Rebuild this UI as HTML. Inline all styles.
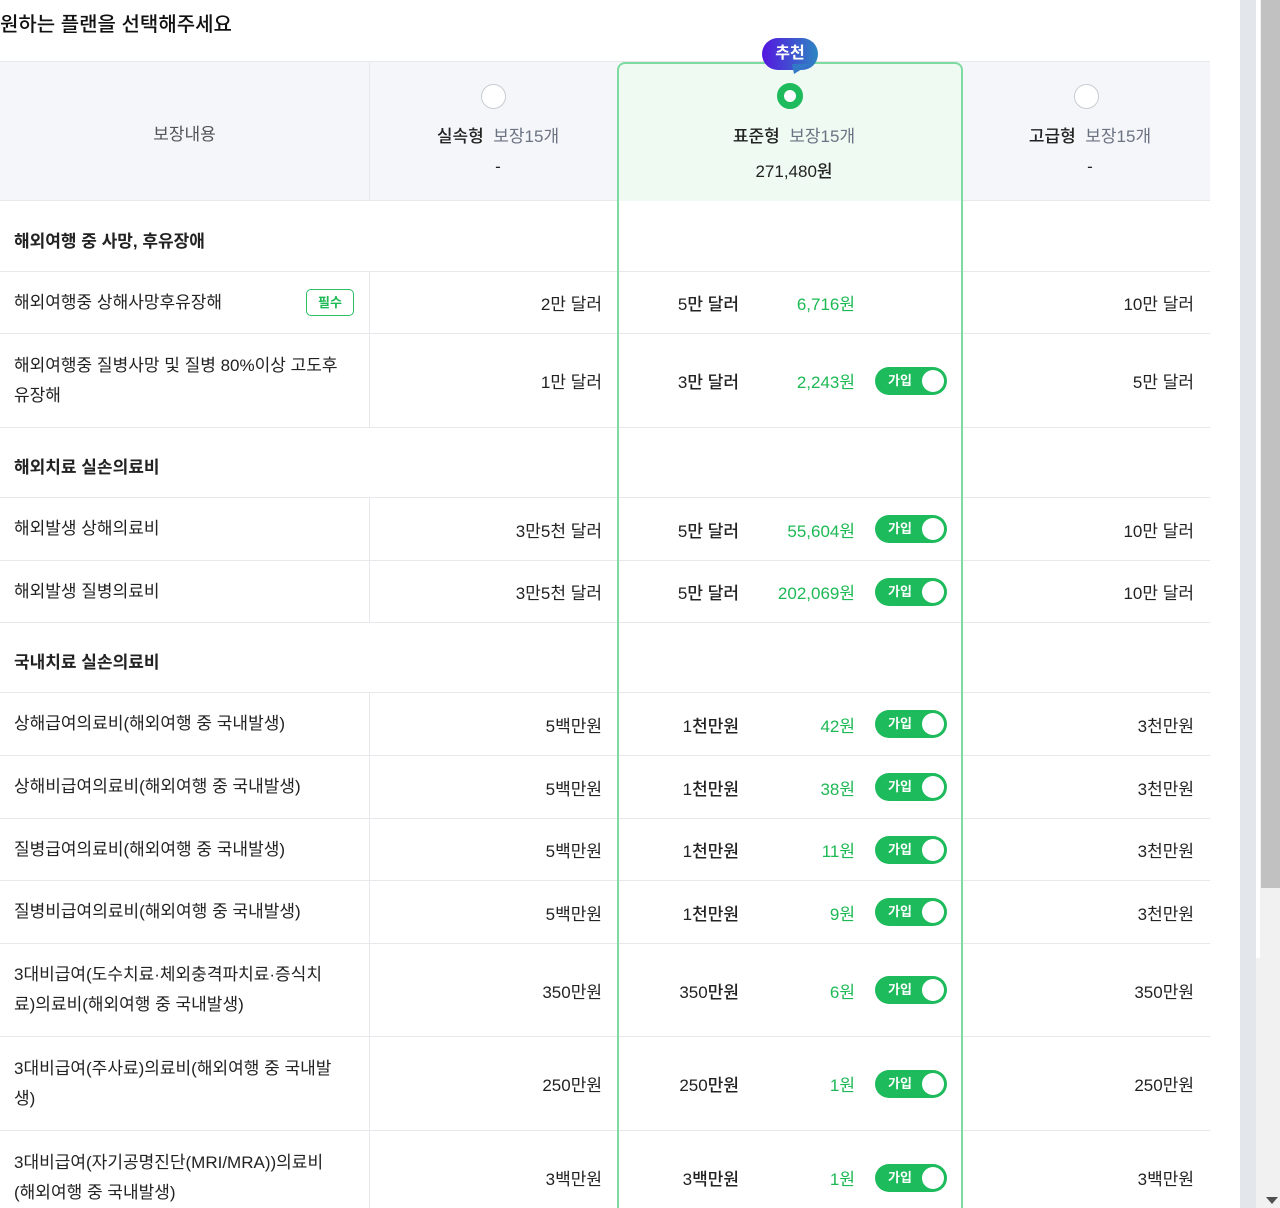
<!DOCTYPE html>
<html style="width:1280px;height:1208px;overflow:hidden"><head><meta charset="utf-8"><style>
*{margin:0;padding:0;box-sizing:border-box}
body{width:1280px;height:1208px;overflow:hidden;background:#fff;font-family:"Liberation Sans","Noto Sans CJK KR",sans-serif;color:#222;position:relative}
.a{position:absolute}
.title{left:0;top:8px;font-size:20px;font-weight:500;color:#111}
.hd{left:0;top:61px;width:1210px;height:140px;background:#f5f6f9;border-top:1px solid #e6e8ec;border-bottom:1px solid #e6e8ec}
.row{position:absolute;left:0;width:1210px;border-bottom:1px solid #e6e8ec;font-size:17px}
.lab{position:absolute;left:0;top:0;bottom:0;width:370px;border-right:1px solid #e6e8ec;padding:0 28px 0 14px;display:flex;align-items:center;line-height:30px}
.c2{position:absolute;right:608px;top:0;bottom:0;display:flex;align-items:center}
.c3{position:absolute;left:618px;width:121px;top:0;bottom:0;display:flex;align-items:center;justify-content:flex-end;font-weight:500}
.pr{position:absolute;left:740px;width:115px;top:0;bottom:0;display:flex;align-items:center;justify-content:flex-end;color:#1db954}
.c4{position:absolute;right:16px;top:0;bottom:0;display:flex;align-items:center}
.sec{font-weight:700;padding-left:14px;display:flex;align-items:center}
.tg{position:absolute;left:875px;width:72px;height:28px;top:50%;margin-top:-14px;background:#1dbb5c;border-radius:14px;color:#fff;font-size:13px;font-weight:700;padding-left:13px;line-height:28px}
.tg:after{content:"";position:absolute;right:3px;top:3px;width:22px;height:22px;border-radius:50%;background:#fff}
.req{position:absolute;right:15px;top:50%;margin-top:-14px;border:1px solid #2bbf66;color:#1db954;border-radius:5px;font-size:13px;font-weight:700;width:48px;height:27px;text-align:center;line-height:25px}
.rad{width:25px;height:25px;border-radius:50%;border:1px solid #c8ccd2;background:#fff}
.ht{font-size:17px;text-align:center}
.ht b{font-weight:500;color:#222}
.ht span{color:#6b7383}
</style></head><body>
<div class="a title">원하는 플랜을 선택해주세요</div>
<div class="a hd"></div>
<div class="a" style="left:369px;top:62px;width:1px;height:138px;background:#e6e8ec"></div>
<div class="a" style="left:618px;top:62px;width:344px;height:139px;background:#eefaf2;border-radius:8px 8px 0 0"></div>
<div class="a" style="left:0;top:120px;width:369px;text-align:center;font-size:17px;color:#555">보장내용</div>
<div class="a rad" style="left:481px;top:84px"></div>
<div class="a rad" style="left:1074px;top:84px"></div>
<div class="a" style="left:777px;top:83px;width:26px;height:26px;border-radius:50%;border:7px solid #1dbb5c;background:#fff"></div>
<div class="a ht" style="left:370px;width:256px;top:122px"><b>실속형</b>&nbsp; <span>보장15개</span></div>
<div class="a ht" style="left:370px;width:256px;top:157px">-</div>
<div class="a ht" style="left:618px;width:352px;top:122px"><b>표준형</b>&nbsp; <span>보장15개</span></div>
<div class="a ht" style="left:618px;width:352px;top:157px;font-weight:500">271,480원</div>
<div class="a ht" style="left:962px;width:256px;top:122px"><b>고급형</b>&nbsp; <span>보장15개</span></div>
<div class="a ht" style="left:962px;width:256px;top:157px">-</div>

<div class="row sec" style="top:201px;height:71px;padding-top:6px">해외여행 중 사망, 후유장애</div>
<div class="row" style="top:272px;height:62px"><div class="lab">해외여행중 상해사망후유장해<div class="req">필수</div></div><div class="c2">2만 달러</div><div class="c3">5만 달러</div><div class="pr">6,716원</div><div class="c4">10만 달러</div></div>
<div class="row" style="top:334px;height:94px"><div class="lab">해외여행중 질병사망 및 질병 80%이상 고도후유장해</div><div class="c2">1만 달러</div><div class="c3">3만 달러</div><div class="pr">2,243원</div><div class="tg">가입</div><div class="c4">5만 달러</div></div>
<div class="row sec" style="top:428px;height:70px;padding-top:6px">해외치료 실손의료비</div>
<div class="row" style="top:498px;height:63px"><div class="lab">해외발생 상해의료비</div><div class="c2">3만5천 달러</div><div class="c3">5만 달러</div><div class="pr">55,604원</div><div class="tg">가입</div><div class="c4">10만 달러</div></div>
<div class="row" style="top:561px;height:62px"><div class="lab">해외발생 질병의료비</div><div class="c2">3만5천 달러</div><div class="c3">5만 달러</div><div class="pr">202,069원</div><div class="tg">가입</div><div class="c4">10만 달러</div></div>
<div class="row sec" style="top:623px;height:70px;padding-top:6px">국내치료 실손의료비</div>
<div class="row" style="top:693px;height:63px"><div class="lab">상해급여의료비(해외여행 중 국내발생)</div><div class="c2">5백만원</div><div class="c3">1천만원</div><div class="pr">42원</div><div class="tg">가입</div><div class="c4">3천만원</div></div>
<div class="row" style="top:756px;height:63px"><div class="lab">상해비급여의료비(해외여행 중 국내발생)</div><div class="c2">5백만원</div><div class="c3">1천만원</div><div class="pr">38원</div><div class="tg">가입</div><div class="c4">3천만원</div></div>
<div class="row" style="top:819px;height:62px"><div class="lab">질병급여의료비(해외여행 중 국내발생)</div><div class="c2">5백만원</div><div class="c3">1천만원</div><div class="pr">11원</div><div class="tg">가입</div><div class="c4">3천만원</div></div>
<div class="row" style="top:881px;height:63px"><div class="lab">질병비급여의료비(해외여행 중 국내발생)</div><div class="c2">5백만원</div><div class="c3">1천만원</div><div class="pr">9원</div><div class="tg">가입</div><div class="c4">3천만원</div></div>
<div class="row" style="top:944px;height:93px"><div class="lab">3대비급여(도수치료·체외충격파치료·증식치료)의료비(해외여행 중 국내발생)</div><div class="c2">350만원</div><div class="c3">350만원</div><div class="pr">6원</div><div class="tg">가입</div><div class="c4">350만원</div></div>
<div class="row" style="top:1037px;height:94px"><div class="lab">3대비급여(주사료)의료비(해외여행 중 국내발생)</div><div class="c2">250만원</div><div class="c3">250만원</div><div class="pr">1원</div><div class="tg">가입</div><div class="c4">250만원</div></div>
<div class="row" style="top:1131px;height:94px"><div class="lab">3대비급여(자기공명진단(MRI/MRA))의료비(해외여행 중 국내발생)</div><div class="c2">3백만원</div><div class="c3">3백만원</div><div class="pr">1원</div><div class="tg">가입</div><div class="c4">3백만원</div></div>

<div class="a" style="left:617px;top:62px;width:346px;height:1200px;border:2px solid #7ddba2;border-radius:8px"></div>
<div class="a" style="left:762px;top:38px;width:56px;height:32px;border-radius:16px;background:linear-gradient(90deg,#5515e0,#2d86c2);color:#fff;font-weight:700;font-size:16px;text-align:center;line-height:31px">추천</div>
<svg class="a" style="left:790px;top:64px" width="22" height="12"><path d="M2 0 L20 0 L4 10 Z" fill="#327ac8"/></svg>

<div class="a" style="left:1240px;top:0;width:16px;height:1208px;background:#e3e6eb"></div>
<div class="a" style="left:1256px;top:0;width:24px;height:1208px;background:#f1f1f1"></div>
<div class="a" style="left:1256px;top:0;width:4px;height:958px;background:#fff"></div>
<div class="a" style="left:1261px;top:0;width:19px;height:888px;background:#c1c1c1"></div>
<svg class="a" style="left:1266px;top:1197px" width="12" height="8"><path d="M0 0 L12 0 L6 7 Z" fill="#505050"/></svg>
</body></html>
